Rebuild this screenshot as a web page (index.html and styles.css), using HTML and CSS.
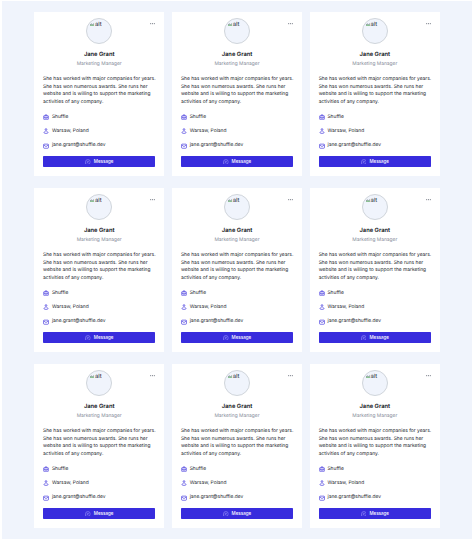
FILE: index.html
```
<!DOCTYPE html>
<html lang="en">
<head>
<meta charset="utf-8">
<title>Team contacts</title>
<link rel="stylesheet" href="styles.css">
</head>
<body>
<svg class="sprite" aria-hidden="true">
  <symbol id="broken" viewBox="0 0 8 10"><path d="M0 6 3 4l2 2 3-2v4H0z" fill="#8fc596"/><path d="M0 6 3 3.500l2 2L8 3" fill="none" stroke="#66717c" stroke-width="1.200"/></symbol>
  <symbol id="case" viewBox="0 0 16 16"><path d="M5.500 5V2.500h5V5M2 5h12v9H2zM2 8.500l6 2 6-2M8 9v3" fill="none" stroke="currentColor" stroke-width="1.700" stroke-linejoin="round"/></symbol>
  <symbol id="place" viewBox="0 0 16 16"><circle cx="8" cy="4" r="2.300" fill="none" stroke="currentColor" stroke-width="1.700"/><path d="M8 6.500V11M5 9.500c-5 2-2 5 3 5s8-3 3-5" fill="none" stroke="currentColor" stroke-width="1.700"/></symbol>
  <symbol id="mail" viewBox="0 0 16 16"><rect x="1.500" y="3" width="13" height="11" rx="2" fill="none" stroke="currentColor" stroke-width="1.700"/><path d="m2 5 6 4.500L14 5" fill="none" stroke="currentColor" stroke-width="1.700"/></symbol>
  <symbol id="chat" viewBox="0 0 16 16"><path d="M1.500 14.500V8A6.500 6.500 0 1 1 8 14.500z" fill="none" stroke="currentColor" stroke-width="1.300"/><path d="M5 6.500h6M5 9.500h4" stroke="currentColor" stroke-width="1.300"/></symbol>
  <symbol id="dots" viewBox="0 0 15 4"><circle cx="2" cy="2" r="1.800"/><circle cx="7.500" cy="2" r="1.800"/><circle cx="13" cy="2" r="1.800"/></symbol>
</svg>
<main class="section">
  <article class="card">
    <svg class="menu"><use href="#dots"/></svg>
    <div class="avatar"><svg class="broken"><use href="#broken"/></svg><span>alt</span></div>
    <h2 class="name">Jane Grant</h2>
    <p class="role">Marketing Manager</p>
    <p class="bio">She has worked with major companies for years.<br>She has won numerous awards. She runs her<br>website and is willing to support the marketing<br>activities of any company.</p>
    <ul class="details"><li><svg><use href="#case"/></svg><span>Shuffle</span></li><li><svg><use href="#place"/></svg><span>Warsaw, Poland</span></li><li><svg><use href="#mail"/></svg><span>jane.grant@shuffle.dev</span></li></ul>
    <button class="message"><svg><use href="#chat"/></svg><span>Message</span></button>
  </article>
  <article class="card">
    <svg class="menu"><use href="#dots"/></svg>
    <div class="avatar"><svg class="broken"><use href="#broken"/></svg><span>alt</span></div>
    <h2 class="name">Jane Grant</h2>
    <p class="role">Marketing Manager</p>
    <p class="bio">She has worked with major companies for years.<br>She has won numerous awards. She runs her<br>website and is willing to support the marketing<br>activities of any company.</p>
    <ul class="details"><li><svg><use href="#case"/></svg><span>Shuffle</span></li><li><svg><use href="#place"/></svg><span>Warsaw, Poland</span></li><li><svg><use href="#mail"/></svg><span>jane.grant@shuffle.dev</span></li></ul>
    <button class="message"><svg><use href="#chat"/></svg><span>Message</span></button>
  </article>
  <article class="card">
    <svg class="menu"><use href="#dots"/></svg>
    <div class="avatar"><svg class="broken"><use href="#broken"/></svg><span>alt</span></div>
    <h2 class="name">Jane Grant</h2>
    <p class="role">Marketing Manager</p>
    <p class="bio">She has worked with major companies for years.<br>She has won numerous awards. She runs her<br>website and is willing to support the marketing<br>activities of any company.</p>
    <ul class="details"><li><svg><use href="#case"/></svg><span>Shuffle</span></li><li><svg><use href="#place"/></svg><span>Warsaw, Poland</span></li><li><svg><use href="#mail"/></svg><span>jane.grant@shuffle.dev</span></li></ul>
    <button class="message"><svg><use href="#chat"/></svg><span>Message</span></button>
  </article>
  <article class="card">
    <svg class="menu"><use href="#dots"/></svg>
    <div class="avatar"><svg class="broken"><use href="#broken"/></svg><span>alt</span></div>
    <h2 class="name">Jane Grant</h2>
    <p class="role">Marketing Manager</p>
    <p class="bio">She has worked with major companies for years.<br>She has won numerous awards. She runs her<br>website and is willing to support the marketing<br>activities of any company.</p>
    <ul class="details"><li><svg><use href="#case"/></svg><span>Shuffle</span></li><li><svg><use href="#place"/></svg><span>Warsaw, Poland</span></li><li><svg><use href="#mail"/></svg><span>jane.grant@shuffle.dev</span></li></ul>
    <button class="message"><svg><use href="#chat"/></svg><span>Message</span></button>
  </article>
  <article class="card">
    <svg class="menu"><use href="#dots"/></svg>
    <div class="avatar"><svg class="broken"><use href="#broken"/></svg><span>alt</span></div>
    <h2 class="name">Jane Grant</h2>
    <p class="role">Marketing Manager</p>
    <p class="bio">She has worked with major companies for years.<br>She has won numerous awards. She runs her<br>website and is willing to support the marketing<br>activities of any company.</p>
    <ul class="details"><li><svg><use href="#case"/></svg><span>Shuffle</span></li><li><svg><use href="#place"/></svg><span>Warsaw, Poland</span></li><li><svg><use href="#mail"/></svg><span>jane.grant@shuffle.dev</span></li></ul>
    <button class="message"><svg><use href="#chat"/></svg><span>Message</span></button>
  </article>
  <article class="card">
    <svg class="menu"><use href="#dots"/></svg>
    <div class="avatar"><svg class="broken"><use href="#broken"/></svg><span>alt</span></div>
    <h2 class="name">Jane Grant</h2>
    <p class="role">Marketing Manager</p>
    <p class="bio">She has worked with major companies for years.<br>She has won numerous awards. She runs her<br>website and is willing to support the marketing<br>activities of any company.</p>
    <ul class="details"><li><svg><use href="#case"/></svg><span>Shuffle</span></li><li><svg><use href="#place"/></svg><span>Warsaw, Poland</span></li><li><svg><use href="#mail"/></svg><span>jane.grant@shuffle.dev</span></li></ul>
    <button class="message"><svg><use href="#chat"/></svg><span>Message</span></button>
  </article>
  <article class="card">
    <svg class="menu"><use href="#dots"/></svg>
    <div class="avatar"><svg class="broken"><use href="#broken"/></svg><span>alt</span></div>
    <h2 class="name">Jane Grant</h2>
    <p class="role">Marketing Manager</p>
    <p class="bio">She has worked with major companies for years.<br>She has won numerous awards. She runs her<br>website and is willing to support the marketing<br>activities of any company.</p>
    <ul class="details"><li><svg><use href="#case"/></svg><span>Shuffle</span></li><li><svg><use href="#place"/></svg><span>Warsaw, Poland</span></li><li><svg><use href="#mail"/></svg><span>jane.grant@shuffle.dev</span></li></ul>
    <button class="message"><svg><use href="#chat"/></svg><span>Message</span></button>
  </article>
  <article class="card">
    <svg class="menu"><use href="#dots"/></svg>
    <div class="avatar"><svg class="broken"><use href="#broken"/></svg><span>alt</span></div>
    <h2 class="name">Jane Grant</h2>
    <p class="role">Marketing Manager</p>
    <p class="bio">She has worked with major companies for years.<br>She has won numerous awards. She runs her<br>website and is willing to support the marketing<br>activities of any company.</p>
    <ul class="details"><li><svg><use href="#case"/></svg><span>Shuffle</span></li><li><svg><use href="#place"/></svg><span>Warsaw, Poland</span></li><li><svg><use href="#mail"/></svg><span>jane.grant@shuffle.dev</span></li></ul>
    <button class="message"><svg><use href="#chat"/></svg><span>Message</span></button>
  </article>
  <article class="card">
    <svg class="menu"><use href="#dots"/></svg>
    <div class="avatar"><svg class="broken"><use href="#broken"/></svg><span>alt</span></div>
    <h2 class="name">Jane Grant</h2>
    <p class="role">Marketing Manager</p>
    <p class="bio">She has worked with major companies for years.<br>She has won numerous awards. She runs her<br>website and is willing to support the marketing<br>activities of any company.</p>
    <ul class="details"><li><svg><use href="#case"/></svg><span>Shuffle</span></li><li><svg><use href="#place"/></svg><span>Warsaw, Poland</span></li><li><svg><use href="#mail"/></svg><span>jane.grant@shuffle.dev</span></li></ul>
    <button class="message"><svg><use href="#chat"/></svg><span>Message</span></button>
  </article>
</main>
</body>
</html>
```
FILE: styles.css
```
* { box-sizing: border-box; }
body {
  margin: 0;
  padding: 1px 2px;
  background: #fff;
  color: #20242b;
  font-family: Inter, "Liberation Sans", sans-serif;
  font-size: 4.9px;
  text-rendering: geometricPrecision;
}
h2, p, ul { margin: 0; padding: 0; }
.sprite { position: absolute; width: 0; height: 0; }
.section {
  height: 537.5px;
  padding: 10.8px 0 0 32.3px;
  background: #f0f4fc;
  display: grid;
  grid-template-columns: repeat(3, 129.8px);
  grid-template-rows: repeat(3, 164.3px);
  column-gap: 8px;
  row-gap: 11.7px;
}
.card {
  position: relative;
  display: flex;
  flex-direction: column;
  align-items: center;
  padding: 6px 8.8px 0;
  background: #fff;
}
.menu { position: absolute; top: 11.6px; right: 8.8px; width: 5px; height: 1.5px; fill: #4b5260; }
.avatar {
  width: 26.4px;
  height: 26.4px;
  flex: none;
  display: flex;
  align-items: flex-start;
  gap: 0.8px;
  padding: 2.6px 0 0 3.2px;
  border: 1px solid #d0d5db;
  border-radius: 50%;
  background: #f0f4fc;
  font-size: 5.8px;
  line-height: 7px;
}
.broken { width: 4px; height: 5px; margin-top: 1px; }
.name { margin-top: 5.9px; font-size: 5.8px; line-height: 9px; font-weight: 600; color: #111419; }
.role { margin-top: 2px; line-height: 7.3px; color: #858b99; }
.bio { align-self: stretch; margin-top: 8px; line-height: 7.4px; white-space: nowrap; }
.details { align-self: stretch; margin-top: 7.6px; display: grid; gap: 6.9px; list-style: none; }
.details li { display: flex; align-items: center; gap: 2.8px; height: 7.3px; line-height: 7.3px; }
.details svg { width: 6px; height: 6px; color: #382cdd; }
.message {
  align-self: stretch;
  height: 11.5px;
  margin-top: 6.5px;
  padding: 0;
  display: flex;
  align-items: center;
  justify-content: center;
  gap: 3px;
  border: 0;
  border-radius: 0.8px;
  background: #382cdd;
  color: #fff;
  font: 500 4.5px/7px Inter, "Liberation Sans", sans-serif;
}
.message svg { width: 5.8px; height: 5.8px; color: #b6b2ff; }
```
